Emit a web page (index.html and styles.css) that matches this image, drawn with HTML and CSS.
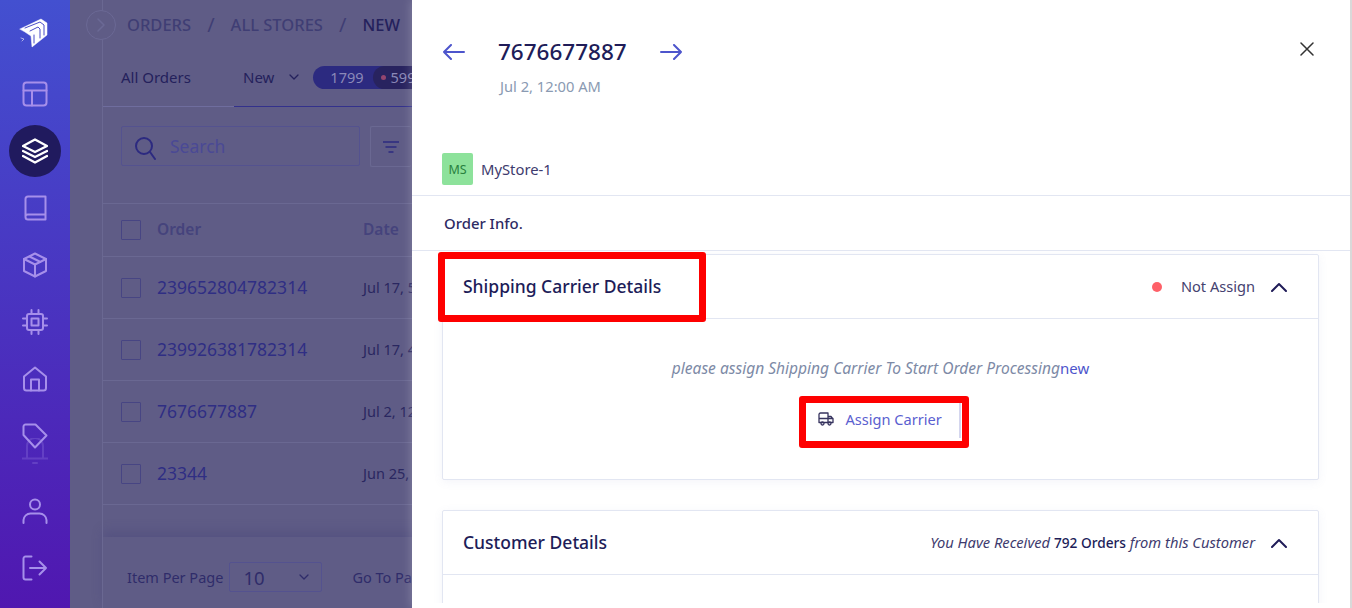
FILE: index.html
```html
<!DOCTYPE html>
<html lang="en">
<head>
  <meta charset="UTF-8">
  <title>Orders</title>
  <link rel="stylesheet" href="styles.css">
</head>
<body>
  <div class="app">
    <aside class="sidebar">
      <div class="logo">
        <svg width="30" height="30" viewBox="0 0 30 30"><path class="logo-fill" d="M1 11L22 1L28 5V17L13 29L12 18L6 14Z"/><path class="logo-gap" d="M6 10L21 4L25 7V17M11 13L19 9L21 11V20M15 17V25"/><path class="logo-dot" d="M2 20L5 21L3 23"/></svg>
      </div>
      <nav class="nav">
        <a class="nav-item"><svg class="icon" viewBox="0 0 26 26"><rect x="1.5" y="1.5" width="23" height="23" rx="3"/><path d="M1.5 9.5H24.5M10 9.5V24.5"/></svg></a>
        <a class="nav-item active"><span class="nav-circle"><svg class="icon" viewBox="0 0 26 26"><path d="M13 1.5L25 8L13 14L1 8Z"/><path d="M1 13L13 19L25 13"/><path d="M1 18L13 24.5L25 18"/></svg></span></a>
        <a class="nav-item"><svg class="icon" viewBox="0 0 26 26"><path d="M3.5 21V4A2.5 2.5 0 0 1 6 1.5H23.5V24.5H6A2.5 2.5 0 0 1 3.5 22V21A2.5 2.5 0 0 1 6 19.5H23.5"/></svg></a>
        <a class="nav-item"><svg class="icon" viewBox="0 0 26 26"><path d="M13 1.5L24 7V19L13 24.5L2 19V7Z"/><path d="M2 7L13 12.5L24 7M13 12.5V24.5M7.5 4.5L18.5 10"/></svg></a>
        <a class="nav-item"><svg class="icon" viewBox="0 0 26 26"><rect x="5" y="5" width="16" height="16" rx="2"/><rect x="9.5" y="9.5" width="7" height="7"/><path d="M9.5 1V5M16.5 1V5M9.5 21V25M16.5 21V25M1 9.5H5M1 16.5H5M21 9.5H25M21 16.5H25"/></svg></a>
        <a class="nav-item"><svg class="icon" viewBox="0 0 26 26"><path d="M2 10.5L13 1.5L24 10.5V22A2.5 2.5 0 0 1 21.5 24.5H4.500A2.500 2.500 0 0 1 2 22Z"/><path d="M9 24.500V13.500H17V24.500"/></svg></a>
        <a class="nav-item">
          <svg class="icon bell" viewBox="0 0 26 26"><path d="M5 20V8A8 8 0 0 1 21 8V20M0.500 20.500H25.500"/><path d="M11 25H15"/></svg>
          <svg class="icon tag" viewBox="0 0 26 26"><path d="M1.500 3.500A2 2 0 0 1 3.500 1.500H13.500L24.500 12.500L13 24.500L1.500 12Z"/></svg>
        </a>
        <div class="nav-bottom">
          <a class="nav-item"><svg class="icon" viewBox="0 0 26 26"><circle cx="13" cy="6.500" r="5"/><path d="M1.500 25V22A7 7 0 0 1 8.500 15.500H17.500A7 7 0 0 1 24.500 22V25"/></svg></a>
          <a class="nav-item"><svg class="icon" viewBox="0 0 26 26"><path d="M9.500 1.500H3.500A2 2 0 0 0 1.500 3.500V22.500A2 2 0 0 0 3.500 24.500H9.500"/><path d="M8 13H24M17.500 6.500L24 13L17.500 19.500"/></svg></a>
        </div>
      </nav>
    </aside>

    <main class="main">
      <div class="gutter">
        <span class="toggle"><svg width="10" height="14" viewBox="0 0 10 14"><path d="M2 1L8 7L2 13"/></svg></span>
      </div>
      <div class="content">
        <div class="crumbs">
          <span>ORDERS</span><i class="crumb-sep">/</i><span>ALL STORES</span><i class="crumb-sep">/</i><b>NEW</b>
        </div>
        <div class="tabs">
          <span class="tab-all">All Orders</span>
          <div class="tab-new">
            <span>New</span>
            <svg width="10" height="6" viewBox="0 0 10 6"><path d="M1 1L5 5L9 1"/></svg>
            <span class="pill"><span class="pill-count">1799</span><span class="pill-alert"><i></i>599</span></span>
          </div>
        </div>
        <div class="toolbar">
          <div class="search">
            <svg width="22" height="24" viewBox="0 0 22 24"><circle cx="10" cy="10" r="8"/><path d="M16 16L21 23"/></svg>
            <span>Search</span>
          </div>
          <div class="filter">
            <svg width="16" height="12" viewBox="0 0 16 12"><path d="M0 1H16M3 6H13M6 11H10"/></svg>
          </div>
        </div>
        <div class="table">
          <div class="row head"><span class="check"></span><span class="col-order">Order</span><span class="col-date">Date</span></div>
          <div class="row"><span class="check"></span><span class="col-order">239652804782314</span><span class="col-date">Jul 17, 5:00 PM</span></div>
          <div class="row"><span class="check"></span><span class="col-order">239926381782314</span><span class="col-date">Jul 17, 4:00 PM</span></div>
          <div class="row"><span class="check"></span><span class="col-order">7676677887</span><span class="col-date">Jul 2, 12:00 AM</span></div>
          <div class="row"><span class="check"></span><span class="col-order">23344</span><span class="col-date">Jun 25, 1:00 PM</span></div>
        </div>
        <div class="pager">
          <span>Item Per Page</span>
          <div class="per-page"><span>10</span><svg width="10" height="6" viewBox="0 0 10 6"><path d="M1 1L5 5L9 1"/></svg></div>
          <span class="goto">Go To Page</span>
        </div>
      </div>
    </main>

    <section class="panel">
      <header class="panel-top">
        <svg class="arrow" width="22" height="16" viewBox="0 0 22 16"><path d="M21 8H1M8 1L1 8L8 15"/></svg>
        <div class="panel-title">
          <h1>7676677887</h1>
          <p>Jul 2, 12:00 AM</p>
        </div>
        <svg class="arrow" width="22" height="16" viewBox="0 0 22 16"><path d="M1 8H21M14 1L21 8L14 15"/></svg>
        <svg class="close" width="14" height="14" viewBox="0 0 14 14"><path d="M1 1L13 13M13 1L1 13"/></svg>
      </header>
      <div class="store"><span class="store-badge">MS</span><span>MyStore-1</span></div>
      <div class="section-tab">Order Info.</div>
      <div class="panel-body">
        <div class="card first">
          <div class="card-head">
            <h2>Shipping Carrier Details</h2>
            <span class="status"><i class="dot"></i>Not Assign</span>
            <svg class="chev" width="16" height="10" viewBox="0 0 16 10"><path d="M1 9L8 2L15 9"/></svg>
          </div>
          <div class="card-body">
            <p class="hint">please assign Shipping Carrier To Start Order Processing<span>new</span></p>
            <button class="assign">
              <svg width="16" height="14" viewBox="0 0 16 14"><path d="M1 2.500A1.500 1.500 0 0 1 2.500 1H10V10.500H1ZM10 4.500H13L15 7V10.500H10M1 6.500H15"/><circle cx="4.500" cy="11.500" r="1.500"/><circle cx="11.500" cy="11.500" r="1.500"/></svg>
              Assign Carrier
            </button>
          </div>
        </div>
        <div class="card">
          <div class="card-head">
            <h2>Customer Details</h2>
            <span class="received"><em>You Have Received</em> <b>792 Orders</b> <em>from this Customer</em></span>
            <svg class="chev" width="16" height="10" viewBox="0 0 16 10"><path d="M1 9L8 2L15 9"/></svg>
          </div>
          <div class="card-body"></div>
        </div>
      </div>
    </section>

    <div class="mark mark-title"></div>
    <div class="mark mark-button"></div>
  </div>
</body>
</html>
```

FILE: styles.css
```css
* {
  box-sizing: border-box;
}
body {
  margin: 0;
  font-family: 'Noto Sans', 'Open Sans', sans-serif;
  overflow: hidden;
}
svg path, svg circle, svg rect {
  fill: none;
  stroke-linecap: round;
  stroke-linejoin: round;
}
.app {
  position: relative;
  display: flex;
  width: 1352px;
  height: 608px;
  overflow: hidden;
}

/* sidebar */
.sidebar {
  width: 70px;
  flex-shrink: 0;
  display: flex;
  flex-direction: column;
  background: linear-gradient(180deg, #4350d0, #5017b0);
}
.logo {
  height: 65px;
  display: flex;
  justify-content: center;
  padding-top: 18px;
  padding-right: 2px;
}
.logo svg .logo-fill {
  fill: #fff;
  stroke: #fff;
  stroke-width: 0.5;
}
.logo-gap {
  stroke: #4a4cc8;
  stroke-width: 1;
}
.logo-dot {
  stroke: #c9c8f0;
  stroke-width: 0.8;
}
.nav {
  flex: 1;
  display: flex;
  flex-direction: column;
  padding-bottom: 12px;
}
.nav-bottom {
  margin-top: auto;
}
.nav-item {
  position: relative;
  height: 57px;
  display: flex;
  align-items: center;
  justify-content: center;
}
.icon {
  width: 26px;
  height: 26px;
}
.icon path, .icon rect, .icon circle {
  stroke: #a68fea;
  stroke-width: 2;
}
.nav-circle {
  width: 52px;
  height: 52px;
  border-radius: 50%;
  background: #201a5e;
  display: flex;
  align-items: center;
  justify-content: center;
}
.nav-circle .icon path {
  stroke: #fff;
  stroke-width: 2.300;
}
.tag {
  position: relative;
}
.bell {
  position: absolute;
  left: 22px;
  top: 31px;
  opacity: 0.25;
}

/* page behind the panel */
.main {
  flex: 1;
  display: flex;
  background: #5f5c86;
  min-width: 0;
}
.gutter {
  width: 33px;
  flex-shrink: 0;
  border-right: 1px solid #6a6892;
  position: relative;
}
.toggle {
  position: absolute;
  left: 16px;
  top: 10px;
  width: 30px;
  height: 30px;
  border-radius: 50%;
  border: 1px solid #6b6995;
  background: #5f5c86;
  display: flex;
  align-items: center;
  justify-content: center;
}
.toggle path {
  stroke: #6b6995;
  stroke-width: 1.5;
}
.content {
  width: 400px;
  flex-shrink: 0;
  display: flex;
  flex-direction: column;
}
.crumbs {
  height: 50px;
  display: flex;
  align-items: center;
  padding: 0 0 2px 24px;
  font-size: 16.500px;
  font-weight: 500;
  color: #3f3e74;
  white-space: nowrap;
}
.crumbs b {
  font-weight: 500;
  color: #24215c;
}
.crumb-sep {
  font-style: normal;
  font-weight: 400;
  font-size: 20px;
  margin: 0 16px;
}
.tabs {
  height: 57px;
  display: flex;
  align-items: center;
  border-bottom: 1px solid #6f6d9e;
  font-size: 15px;
  color: #24215c;
  white-space: nowrap;
}
.tab-all {
  padding: 0 0 2px 18px;
  width: 131px;
}
.tab-new {
  flex: 1;
  height: 57px;
  margin-bottom: -1px;
  display: flex;
  align-items: center;
  padding: 0 0 2px 9px;
  border-bottom: 1px solid #33318c;
  overflow: hidden;
}
.tab-new svg {
  margin: 0 14px 0 15px;
}
.tab-new svg path {
  stroke: #24215c;
  stroke-width: 1.3;
}
.pill {
  display: flex;
  height: 23px;
  border-radius: 12px;
  background: #2c2a80;
  color: #8b89b8;
  font-size: 14.500px;
  line-height: 23px;
}
.pill-count {
  padding: 0 9px 0 17px;
}
.pill-alert {
  display: flex;
  align-items: center;
  gap: 5px;
  padding: 0 10px 0 8px;
  background: #28235f;
  border-radius: 12px;
}
.pill-alert i {
  width: 5px;
  height: 5px;
  border-radius: 50%;
  background: #93456f;
}
.toolbar {
  display: flex;
  gap: 10px;
  padding: 19px 0 0 18px;
  height: 96px;
}
.search {
  width: 239px;
  height: 40px;
  border: 1px solid #54528f;
  border-radius: 2px;
  display: flex;
  align-items: center;
  gap: 14px;
  padding-left: 12px;
  font-size: 17.500px;
  color: #4a4995;
}
.search svg {
  margin-top: 3px;
}
.search path, .search circle {
  stroke: #2c2a80;
  stroke-width: 2;
}
.filter {
  width: 41px;
  height: 41px;
  border: 1px solid #6a6892;
  border-right: 0;
  border-radius: 2px;
  display: flex;
  align-items: center;
  justify-content: center;
}
.filter path {
  stroke: #2c2a80;
  stroke-width: 1.4;
}
.table {
  border-top: 1px solid #6a6892;
}
.row {
  height: 62px;
  display: flex;
  align-items: center;
  padding: 0 0 0 18px;
  border-bottom: 1px solid #6a6892;
  white-space: nowrap;
  overflow: hidden;
}
.row.head {
  height: 53px;
  padding-bottom: 1px;
  color: #45437c;
  font-weight: 600;
}
.check {
  width: 20px;
  height: 20px;
  flex-shrink: 0;
  border: 1px solid #474583;
  border-radius: 1px;
  margin-right: 16px;
}
.col-order {
  width: 206px;
  flex-shrink: 0;
  padding-bottom: 2px;
  font-size: 17.500px;
  color: #2f2e84;
}
.col-date {
  padding-bottom: 2px;
  font-size: 14.500px;
  color: #2a2760;
}
.head .col-order, .head .col-date {
  font-size: 15.500px;
  color: #45437c;
}
.pager {
  margin-top: 32px;
  flex: 1;
  display: flex;
  align-items: center;
  padding: 9px 0 0 24px;
  background: #5f5c86;
  box-shadow: 0 -6px 10px rgba(70,66,120,0.35);
  font-size: 14.500px;
  color: #2f2c6a;
  white-space: nowrap;
}
.per-page {
  width: 93px;
  height: 30px;
  margin: 0 30px 0 6px;
  border: 1px solid #54528f;
  border-radius: 2px;
  display: flex;
  align-items: center;
  justify-content: space-between;
  padding: 0 12px 0 13px;
  font-size: 18.500px;
  flex-shrink: 0;
}
.per-page path {
  stroke: #2f2c6a;
  stroke-width: 1.3;
}

/* order panel */
.panel {
  position: absolute;
  left: 412px;
  top: 0;
  width: 938px;
  height: 608px;
  background: #fff;
  box-shadow: 0 0 10px rgba(255,255,255,0.25);
  color: #24215c;
}
.app::after {
  content: '';
  position: absolute;
  right: 0;
  top: 0;
  width: 2px;
  height: 608px;
  background: #d9d9d9;
}
.panel-top {
  height: 153px;
  display: flex;
  align-items: flex-start;
  padding: 30px 36px 0 31px;
}
.arrow {
  margin-top: 14px;
}
.arrow path {
  stroke: #4d55cc;
  stroke-width: 2;
}
.panel-title {
  width: 162px;
  margin-left: 33px;
}
.panel-title h1 {
  margin: 0;
  font-size: 22.500px;
  line-height: 44px;
  font-weight: 500;
  color: #201c58;
}
.panel-title p {
  margin: 2px 0 0 2px;
  font-size: 14.700px;
  line-height: 20px;
  color: #8a9ab2;
}
.close {
  margin-left: auto;
  margin-top: 12px;
}
.close path {
  stroke: #333;
  stroke-width: 1.500;
}
.store {
  height: 43px;
  display: flex;
  gap: 8px;
  padding: 0 0 10px 30px;
  align-items: center;
  border-bottom: 1px solid #e2e6f2;
  font-size: 14.800px;
  color: #3e3b6e;
}
.store-badge {
  width: 31px;
  height: 32px;
  border-radius: 2px;
  background: #8de29b;
  color: #28813f;
  font-size: 12.500px;
  display: flex;
  align-items: center;
  justify-content: center;
}
.section-tab {
  height: 55px;
  display: flex;
  align-items: center;
  padding-left: 32px;
  border-bottom: 1px solid #e2e6f2;
  font-size: 14.900px;
  font-weight: 500;
  color: #2e2b63;
}
.panel-body {
  height: 352px;
  overflow: hidden;
  padding: 3px 31px 0 30px;
}
.card {
  border: 1px solid #e2e6f2;
  border-radius: 2px;
  box-shadow: 0 2px 10px rgba(100,110,180,0.08);
}
.card.first {
  margin-bottom: 30px;
}
.card-head {
  height: 64px;
  display: flex;
  align-items: center;
  padding: 0 31px 0 20px;
  border-bottom: 1px solid #e2e6f2;
}
.card-head h2 {
  margin: 0 auto 0 0;
  padding-bottom: 1px;
  font-size: 17.500px;
  font-weight: 500;
  color: #201c58;
}
.status {
  display: flex;
  align-items: center;
  padding-bottom: 2px;
  font-size: 14.600px;
  color: #45426f;
}
.dot {
  width: 10px;
  height: 10px;
  border-radius: 50%;
  background: #fe6068;
  margin: 2px 19px 0 0;
}
.chev {
  margin-left: 16px;
}
.chev path {
  stroke: #201c58;
  stroke-width: 2;
}
.card-body {
  height: 160px;
  display: flex;
  flex-direction: column;
  align-items: center;
  padding-top: 38px;
}
.hint {
  margin: 0;
  font-size: 15.550px;
  line-height: 22px;
  font-style: italic;
  color: #7d8aa6;
}
.hint span {
  font-style: normal;
  font-size: 15px;
  color: #4d55cc;
}
.assign {
  margin: 21px 0 0 6px;
  height: 38px;
  width: 154px;
  display: flex;
  align-items: center;
  gap: 12px;
  padding: 0 0 0 11px;
  background: #fff;
  border: 0;
  border-right: 2px solid #d4d6ee;
  font-family: inherit;
  font-size: 14.600px;
  color: #5a60d0;
}
.assign svg {
  flex-shrink: 0;
}
.assign path, .assign circle {
  stroke: #37345f;
  stroke-width: 1.300;
}
.received {
  padding-bottom: 2px;
  font-size: 14.700px;
  color: #3e3b6e;
  white-space: nowrap;
}
.received b {
  font-size: 13.700px;
  font-weight: 500;
  color: #201c58;
}

/* red annotation boxes drawn over the screenshot */
.mark {
  position: absolute;
  border: 7px solid #fe0000;
  border-radius: 3px;
}
.mark-title {
  left: 438px;
  top: 252px;
  width: 268px;
  height: 70px;
}
.mark-button {
  left: 799px;
  top: 396px;
  width: 170px;
  height: 52px;
}
```
